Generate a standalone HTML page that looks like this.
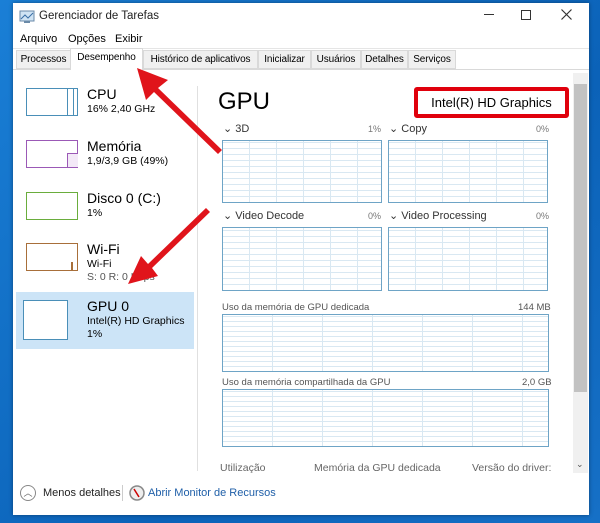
<!DOCTYPE html>
<html><head><meta charset="utf-8"><style>
*{margin:0;padding:0;box-sizing:border-box}
body{width:600px;height:523px;overflow:hidden;background:linear-gradient(135deg,#1a7fd6,#0b62b8 60%,#1670c6);font-family:"Liberation Sans",sans-serif;position:relative;color:#000}
.win{position:absolute;left:13px;top:3px;width:576px;height:512px;background:#fff;box-shadow:0 0 4px rgba(0,0,0,.4)}
.a{position:absolute;white-space:nowrap}
.tab{position:absolute;top:50px;height:19px;font-size:10px;background:#f0f0f0;border:1px solid #d9d9d9;padding:3px 0 0;text-align:center;white-space:nowrap;overflow:hidden;letter-spacing:-0.1px}
.g{position:absolute;border:1px solid #6ea4c6;background-color:#fff;
background-image:repeating-linear-gradient(90deg,transparent 0 26px,#d9e8f2 26px 27px),repeating-linear-gradient(0deg,transparent 0 5px,#d9e8f2 5px 6px)}
.gm{background-image:repeating-linear-gradient(90deg,transparent 0 49px,#d9e8f2 49px 50px),repeating-linear-gradient(0deg,transparent 0 4px,#d9e8f2 4px 5px)}
.lbl{font-size:11px;color:#333}
.pct{font-size:9px;color:#777}
.th{position:absolute;left:26px;width:52px;height:28px;background:#fff}
.n{font-size:14px}
.s{font-size:10.5px}
</style></head><body>
<div class="win">
</div>
<svg class="a" style="left:19px;top:10px" width="16" height="14"><rect x="1" y="1" width="14" height="10" fill="#cfe3f3" stroke="#6a8aa8"/><polyline points="2,9 6,5 9,8 14,3" fill="none" stroke="#3a6ea5"/><rect x="5" y="11" width="6" height="2" fill="#6a8aa8"/></svg>
<div class="a" style="left:39px;top:10px;font-size:11.5px;color:#222">Gerenciador de Tarefas</div>
<div class="a" style="left:484px;top:14px;width:10px;border-top:1px solid #333"></div>
<div class="a" style="left:521px;top:10px;width:10px;height:10px;border:1px solid #333"></div>
<svg class="a" style="left:561px;top:9px" width="11" height="11"><path d="M0.5 0.5L10.5 10.5M10.5 0.5L0.5 10.5" stroke="#333" stroke-width="1.2"/></svg>
<div class="a" style="left:20px;top:33px;font-size:11px">Arquivo</div>
<div class="a" style="left:68px;top:33px;font-size:11px">Opções</div>
<div class="a" style="left:115px;top:33px;font-size:11px">Exibir</div>
<div class="a" style="left:13px;top:48px;width:576px;border-top:1px solid #e5e5e5"></div>
<div class="a" style="left:13px;top:69px;width:576px;border-top:1px solid #d9d9d9"></div>
<div class="tab" style="left:16px;width:55px">Processos</div>
<div class="tab" style="left:70px;top:48px;height:22px;width:73px;background:#fff;border-bottom:none">Desempenho</div>
<div class="tab" style="left:143px;width:115px">Histórico de aplicativos</div>
<div class="tab" style="left:258px;width:53px">Inicializar</div>
<div class="tab" style="left:311px;width:50px">Usuários</div>
<div class="tab" style="left:361px;width:47px">Detalhes</div>
<div class="tab" style="left:408px;width:48px">Serviços</div>
<div class="a" style="left:197px;top:86px;height:385px;border-left:1px solid #e0e0e0"></div>
<div class="th" style="top:88px;border:1px solid #4a8fb8"><div class="a" style="left:40px;top:0;width:1px;height:26px;background:#4a8fb8"></div><div class="a" style="left:46px;top:0;width:1px;height:26px;background:#4a8fb8"></div></div>
<div class="a n" style="left:87px;top:86px">CPU</div><div class="a s" style="left:87px;top:103px">16% 2,40 GHz</div>
<div class="th" style="top:140px;border:1px solid #9b59b6"><div class="a" style="left:40px;top:12px;width:11px;height:14px;background:#f3e9f7;border-left:1px solid #9b59b6;border-top:1px solid #9b59b6"></div></div>
<div class="a n" style="left:87px;top:138px">Memória</div><div class="a s" style="left:87px;top:155px">1,9/3,9 GB (49%)</div>
<div class="th" style="top:192px;border:1px solid #6aad3d"></div>
<div class="a n" style="left:87px;top:190px">Disco 0 (C:)</div><div class="a s" style="left:87px;top:207px">1%</div>
<div class="th" style="top:243px;border:1px solid #a86f3a"><div class="a" style="left:44px;top:18px;width:2px;height:9px;background:#a86f3a"></div></div>
<div class="a n" style="left:87px;top:241px">Wi-Fi</div><div class="a s" style="left:87px;top:258px">Wi-Fi</div><div class="a s" style="left:87px;top:271px;color:#555">S: 0 R: 0 Kbps</div>
<div class="a" style="left:16px;top:292px;width:178px;height:57px;background:#cce4f7"></div>
<div class="a" style="left:23px;top:300px;width:45px;height:40px;background:#fff;border:1px solid #4a8fb8"></div>
<div class="a n" style="left:87px;top:298px">GPU 0</div><div class="a s" style="left:87px;top:315px">Intel(R) HD Graphics</div><div class="a s" style="left:87px;top:328px">1%</div>
<div class="a" style="left:218px;top:88px;font-size:24px">GPU</div>
<div class="a" style="left:414px;top:87px;width:155px;height:31px;border:4px solid #e0000c;border-radius:3px;background:#fff;font-size:13px;text-align:center;padding-top:4px">Intel(R) HD Graphics</div>
<div class="a lbl" style="left:223px;top:122px">⌄ 3D</div><div class="a pct" style="left:368px;top:124px">1%</div>
<div class="a lbl" style="left:389px;top:122px">⌄ Copy</div><div class="a pct" style="left:536px;top:124px">0%</div>
<div class="g" style="left:222px;top:140px;width:160px;height:63px"></div>
<div class="g" style="left:388px;top:140px;width:160px;height:63px"></div>
<div class="a lbl" style="left:223px;top:209px">⌄ Video Decode</div><div class="a pct" style="left:368px;top:211px">0%</div>
<div class="a lbl" style="left:389px;top:209px">⌄ Video Processing</div><div class="a pct" style="left:536px;top:211px">0%</div>
<div class="g" style="left:222px;top:227px;width:160px;height:64px"></div>
<div class="g" style="left:388px;top:227px;width:160px;height:64px"></div>
<div class="a pct" style="left:222px;top:302px;font-size:9.5px;color:#555">Uso da memória de GPU dedicada</div><div class="a pct" style="left:518px;top:302px;font-size:9.5px;color:#555">144 MB</div>
<div class="g gm" style="left:222px;top:314px;width:327px;height:58px"></div>
<div class="a pct" style="left:222px;top:377px;font-size:9.5px;color:#555">Uso da memória compartilhada da GPU</div><div class="a pct" style="left:522px;top:377px;font-size:9.5px;color:#555">2,0 GB</div>
<div class="g gm" style="left:222px;top:389px;width:327px;height:58px"></div>
<div class="a" style="left:220px;top:462px;font-size:10.5px;color:#666">Utilização</div>
<div class="a" style="left:314px;top:462px;font-size:10.5px;color:#666">Memória da GPU dedicada</div>
<div class="a" style="left:472px;top:462px;font-size:10.5px;color:#666">Versão do driver:</div>
<div class="a" style="left:573px;top:73px;width:15px;height:400px;background:#f0f0f0"></div>
<div class="a" style="left:574px;top:84px;width:13px;height:308px;background:#c2c2c2"></div>
<div class="a" style="left:576px;top:459px;font-size:9px;color:#555">⌄</div>
<div class="a" style="left:20px;top:485px;width:16px;height:16px;border:1px solid #888;border-radius:50%;font-size:9px;text-align:center;color:#666;line-height:14px">︿</div>
<div class="a" style="left:43px;top:487px;font-size:11px;color:#222">Menos detalhes</div>
<div class="a" style="left:122px;top:485px;height:16px;border-left:1px solid #ccc"></div>
<svg class="a" style="left:129px;top:485px" width="16" height="16"><circle cx="8" cy="8" r="7" fill="#eee" stroke="#888" stroke-width="1.5"/><line x1="5" y1="4" x2="10" y2="12" stroke="#c00" stroke-width="1.5"/></svg>
<div class="a" style="left:148px;top:487px;font-size:11px;color:#1f5fa8">Abrir Monitor de Recursos</div>
<svg class="a" style="left:0;top:0" width="600" height="523">
<polygon points="137,68 168,80 158,88 222,150 218,154 154,92 146,100" fill="#e0141b"/>
<polygon points="128,284 141,256 148,264 206,208 210,212 152,268 158,276" fill="#e0141b"/>
</svg>
</body></html>
